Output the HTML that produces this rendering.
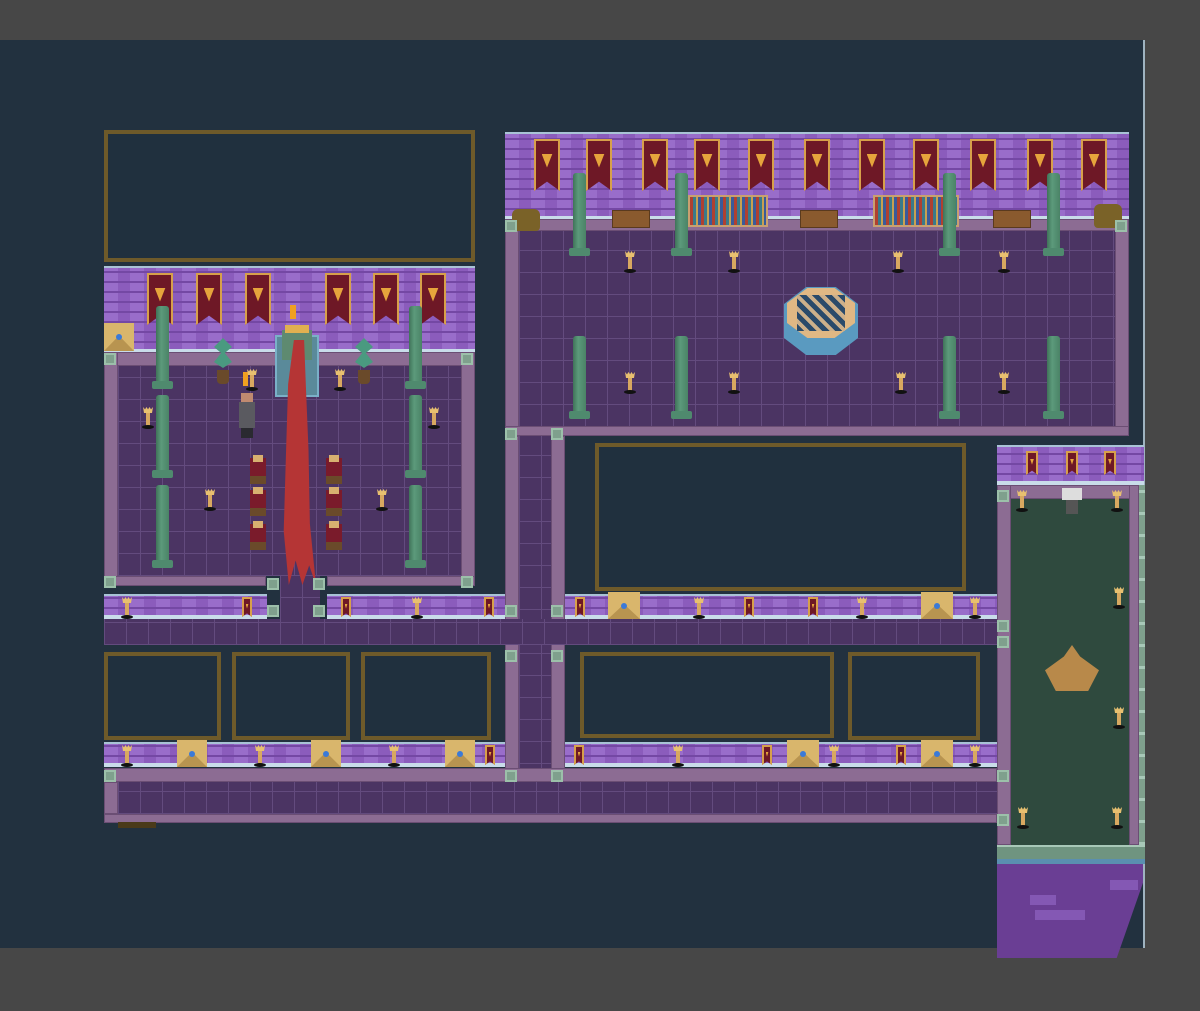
<!DOCTYPE html>
<html><head><meta charset="utf-8">
<style>
*{margin:0;padding:0;box-sizing:border-box}
body{width:1200px;height:1011px;background:#474747;position:relative;overflow:hidden;font-family:"Liberation Sans",sans-serif}
div{position:absolute}
.cv{left:0;top:40px;width:1145px;height:908px;background:#22313f;border-right:2px solid #9fb3c0}
.frame{border:4px solid #6e5a2a;background:#20303e}
.wall{background-color:#8b5cbc;background-image:repeating-linear-gradient(0deg,#7448a4 0 2px,transparent 2px 10px),repeating-linear-gradient(90deg,rgba(170,130,220,.45) 0 14px,transparent 14px 26px);border-top:2px solid #a9c3d6}
.wall:after{content:"";position:absolute;left:0;right:0;bottom:0;height:4px;background:#c9dcea}
.floor{background-color:#4b3463;background-image:repeating-linear-gradient(0deg,#634b7e 0 1px,transparent 1px 22px),repeating-linear-gradient(90deg,#634b7e 0 1px,transparent 1px 22px)}
.trim{background:#8c6c93;border:1px solid #6b4e74}
.sq{width:12px;height:12px;background:#7fa08d;border:2px solid #9cc0aa}
.ban{background:#6e1826;border:2px solid #d7a04a;border-bottom:none;clip-path:polygon(0 0,100% 0,100% 100%,50% 82%,0 100%)}
.ban:after{content:"";position:absolute;left:25%;top:25%;width:50%;height:28%;background:#e6a43c;clip-path:polygon(0 0,100% 0,50% 100%)}
.pil{background:linear-gradient(90deg,#3f7359,#5c9a7b 40%,#4a8366);border-radius:3px 3px 0 0}
.pil:after{content:"";position:absolute;left:-4px;right:-4px;bottom:-3px;height:8px;background:#4f8a6e;border-radius:2px}
.tor{width:4px;height:16px;background:#d8a860}
.tor:before{content:"";position:absolute;left:-3px;top:-3px;width:10px;height:6px;background:#e8c070;clip-path:polygon(0 0,20% 40%,35% 0,50% 40%,65% 0,80% 40%,100% 0,90% 100%,10% 100%)}
.tor:after{content:"";position:absolute;left:-4px;bottom:-3px;width:12px;height:4px;background:#111;border-radius:50%}
.door{background:#d9b66c}
.door:after{content:"";position:absolute;left:0;right:0;bottom:0;height:55%;background:#b89450;clip-path:polygon(50% 0,100% 100%,0 100%)}
.door:before{content:"";position:absolute;left:calc(50% - 3px);top:40%;width:6px;height:6px;background:#3a7ad8;border-radius:50%;z-index:2}
.desk{background:#8a5a2e;border:1px solid #5a3a1e}
.book{background:repeating-linear-gradient(90deg,#b04030 0 3px,#3a7a8a 3px 6px,#c8a050 6px 8px,#3a5a9a 8px 11px);border:2px solid #c8a070}
.ped{width:16px;height:26px;background:#7a1b2b;border-bottom:8px solid #6a4a2a}
.ped:before{content:"";position:absolute;left:3px;top:-3px;width:10px;height:7px;background:#d8b070}
</style></head><body>
<div class="cv"></div>

<div class="frame" style="left:104px;top:130px;width:371px;height:132px"></div>

<div class="wall" style="left:104px;top:266px;width:371px;height:87px"></div>
<div class="door" style="left:104px;top:323px;width:30px;height:28px"></div>
<div class="trim" style="left:104px;top:352px;width:371px;height:14px"></div>
<div class="trim" style="left:104px;top:352px;width:14px;height:234px"></div>
<div class="trim" style="left:461px;top:352px;width:14px;height:234px"></div>
<div class="floor" style="left:118px;top:366px;width:343px;height:210px"></div>
<div class="trim" style="left:104px;top:576px;width:162px;height:10px"></div>
<div class="trim" style="left:327px;top:576px;width:148px;height:10px"></div>
<div class="floor" style="left:280px;top:576px;width:40px;height:44px"></div>
<div style="left:275px;top:335px;width:44px;height:62px;background:#5a8a9a;border:2px solid #7ab0c8"></div>
<div style="left:282px;top:330px;width:30px;height:30px;background:#5e8a70"></div>
<div style="left:285px;top:325px;width:24px;height:8px;background:#e0b050"></div>
<div style="left:290px;top:305px;width:6px;height:14px;background:#f0a020"></div>
<div style="left:282px;top:340px;width:34px;height:245px;background:#b53535;clip-path:polygon(35% 0,65% 0,70% 18%,78% 45%,82% 75%,100% 100%,80% 92%,60% 100%,40% 90%,20% 100%,5% 78%,12% 45%,18% 18%)"></div>
<div style="left:241px;top:393px;width:12px;height:10px;background:#c08a70"></div>
<div style="left:239px;top:402px;width:16px;height:26px;background:#5a5a60"></div>
<div style="left:241px;top:428px;width:12px;height:10px;background:#2a2a30"></div>
<div style="left:243px;top:372px;width:5px;height:14px;background:#f0a020"></div>
<div style="left:214px;top:338px;width:18px;height:30px;background:#4a9a80;clip-path:polygon(50% 0,100% 30%,60% 50%,100% 80%,50% 100%,0 80%,40% 50%,0 30%)"></div>
<div style="left:217px;top:370px;width:12px;height:14px;background:#6a4a2a;border-radius:0 0 4px 4px"></div>
<div style="left:355px;top:338px;width:18px;height:30px;background:#4a9a80;clip-path:polygon(50% 0,100% 30%,60% 50%,100% 80%,50% 100%,0 80%,40% 50%,0 30%)"></div>
<div style="left:358px;top:370px;width:12px;height:14px;background:#6a4a2a;border-radius:0 0 4px 4px"></div>

<div class="wall" style="left:505px;top:132px;width:624px;height:88px"></div>
<div class="trim" style="left:505px;top:219px;width:624px;height:12px"></div>
<div class="trim" style="left:505px;top:219px;width:14px;height:217px"></div>
<div class="trim" style="left:1115px;top:219px;width:14px;height:217px"></div>
<div class="floor" style="left:519px;top:231px;width:596px;height:196px"></div>
<div class="trim" style="left:505px;top:426px;width:624px;height:10px"></div>
<div style="left:512px;top:209px;width:28px;height:22px;background:#7a6228;border-radius:6px 6px 4px 4px"></div>
<div style="left:1094px;top:204px;width:28px;height:24px;background:#7a6228;border-radius:6px 6px 4px 4px"></div>
<div class="desk" style="left:612px;top:210px;width:38px;height:18px"></div>
<div class="desk" style="left:800px;top:210px;width:38px;height:18px"></div>
<div class="desk" style="left:993px;top:210px;width:38px;height:18px"></div>
<div class="book" style="left:688px;top:195px;width:80px;height:32px"></div>
<div class="book" style="left:873px;top:195px;width:86px;height:32px"></div>
<div style="left:784px;top:287px;width:74px;height:68px;background:#5a9ac0;clip-path:polygon(30% 0,70% 0,100% 25%,100% 75%,70% 100%,30% 100%,0 75%,0 25%)"></div>
<div style="left:787px;top:288px;width:68px;height:50px;background:#e0b884;clip-path:polygon(30% 0,70% 0,100% 30%,100% 70%,70% 100%,30% 100%,0 70%,0 30%)"></div>
<div style="left:797px;top:295px;width:48px;height:36px;background:repeating-linear-gradient(45deg,#2a4a6a 0 5px,#cdb08a 5px 9px)"></div>

<div class="trim" style="left:505px;top:436px;width:14px;height:350px"></div>
<div class="trim" style="left:551px;top:436px;width:14px;height:350px"></div>
<div class="floor" style="left:519px;top:436px;width:32px;height:350px"></div>

<div class="frame" style="left:595px;top:443px;width:371px;height:148px"></div>
<div class="frame" style="left:104px;top:652px;width:117px;height:88px"></div>
<div class="frame" style="left:232px;top:652px;width:118px;height:88px"></div>
<div class="frame" style="left:361px;top:652px;width:130px;height:88px"></div>
<div class="frame" style="left:580px;top:652px;width:254px;height:86px"></div>
<div class="frame" style="left:848px;top:652px;width:132px;height:88px"></div>

<div class="wall" style="left:104px;top:594px;width:163px;height:25px"></div>
<div class="wall" style="left:327px;top:594px;width:178px;height:25px"></div>
<div class="wall" style="left:565px;top:594px;width:432px;height:25px"></div>
<div class="floor" style="left:104px;top:619px;width:893px;height:26px"></div>
<div class="door" style="left:608px;top:592px;width:32px;height:27px"></div>
<div class="door" style="left:921px;top:592px;width:32px;height:27px"></div>

<div class="wall" style="left:104px;top:742px;width:401px;height:25px"></div>
<div class="wall" style="left:565px;top:742px;width:432px;height:25px"></div>
<div class="trim" style="left:104px;top:768px;width:893px;height:14px"></div>
<div class="floor" style="left:118px;top:782px;width:879px;height:32px"></div>
<div class="trim" style="left:104px;top:782px;width:14px;height:32px"></div>
<div class="trim" style="left:104px;top:814px;width:893px;height:9px"></div>
<div style="left:118px;top:822px;width:38px;height:6px;background:#4a3a1a"></div>
<div class="door" style="left:177px;top:740px;width:30px;height:27px"></div>
<div class="door" style="left:311px;top:740px;width:30px;height:27px"></div>
<div class="door" style="left:445px;top:740px;width:30px;height:27px"></div>
<div class="door" style="left:787px;top:740px;width:32px;height:27px"></div>
<div class="door" style="left:921px;top:740px;width:32px;height:27px"></div>

<div class="wall" style="left:997px;top:445px;width:147px;height:40px"></div>
<div class="trim" style="left:997px;top:485px;width:147px;height:14px"></div>
<div class="trim" style="left:997px;top:485px;width:14px;height:360px"></div>
<div class="trim" style="left:1129px;top:485px;width:10px;height:360px"></div>
<div style="left:1139px;top:485px;width:6px;height:360px;background:repeating-linear-gradient(0deg,#a8c8b8 0 3px,#7fa08d 3px 22px)"></div>
<div style="left:1011px;top:499px;width:118px;height:346px;background:#2f4a3e"></div>
<div style="left:1062px;top:488px;width:20px;height:12px;background:#ddd"></div>
<div style="left:1066px;top:500px;width:12px;height:14px;background:#555"></div>
<div style="left:1045px;top:645px;width:54px;height:46px;background:#b8894a;clip-path:polygon(50% 0,65% 25%,100% 55%,80% 100%,20% 100%,0 55%,35% 25%)"></div>
<div style="left:997px;top:845px;width:148px;height:14px;background:#6f9480;border-top:2px solid #a8c8b8"></div>
<div style="left:997px;top:859px;width:148px;height:5px;background:#5a8fb0"></div>
<div style="left:997px;top:864px;width:146px;height:94px;background:#6a3e94;clip-path:polygon(0 0,100% 0,100% 20%,82% 100%,0 100%)"></div>
<div style="left:1030px;top:895px;width:26px;height:10px;background:#8458b4"></div>
<div style="left:1035px;top:910px;width:50px;height:10px;background:#8458b4"></div>
<div style="left:1110px;top:880px;width:28px;height:10px;background:#8458b4"></div>

<script>
function add(cls,x,y,w,h){var d=document.createElement('div');d.className=cls;d.style.left=x+'px';d.style.top=y+'px';if(w)d.style.width=w+'px';if(h)d.style.height=h+'px';document.body.appendChild(d);}
[147,196,245,325,373,420].forEach(x=>add('ban',x,273,26,52));
[534,586,642,694,748,804,859,913,970,1027,1081].forEach(x=>add('ban',x,139,26,52));
[1026,1066,1104].forEach(x=>add('ban',x,451,12,24));
[[242,597],[341,597],[484,597],[575,597],[744,597],[808,597],[485,745],[574,745],[762,745],[896,745]].forEach(p=>add('ban',p[0],p[1],10,20));
[[156,306,80],[156,395,80],[156,485,80],[409,306,80],[409,395,80],[409,485,80],[573,173,80],[675,173,80],[943,173,80],[1047,173,80],[573,336,80],[675,336,80],[943,336,80],[1047,336,80]].forEach(p=>add('pil',p[0],p[1],13,p[2]));
[[250,372],[338,372],[146,410],[432,410],[208,492],[380,492],[628,254],[732,254],[896,254],[1002,254],[628,375],[732,375],[899,375],[1002,375],[1020,493],[1115,493],[1117,590],[1117,710],[1021,810],[1115,810],[125,600],[415,600],[697,600],[860,600],[973,600],[125,748],[258,748],[392,748],[676,748],[832,748],[973,748]].forEach(p=>add('tor',p[0],p[1]));
[[250,458],[326,458],[250,490],[326,490],[250,524],[326,524]].forEach(p=>add('ped',p[0],p[1]));
[[104,353],[461,353],[104,576],[461,576],[267,578],[313,578],[267,605],[313,605],[505,428],[551,428],[505,605],[551,605],[505,650],[551,650],[505,770],[551,770],[104,770],[997,490],[997,620],[997,636],[997,770],[997,814],[1115,220],[505,220]].forEach(p=>add('sq',p[0],p[1]));
</script>
</body></html>
